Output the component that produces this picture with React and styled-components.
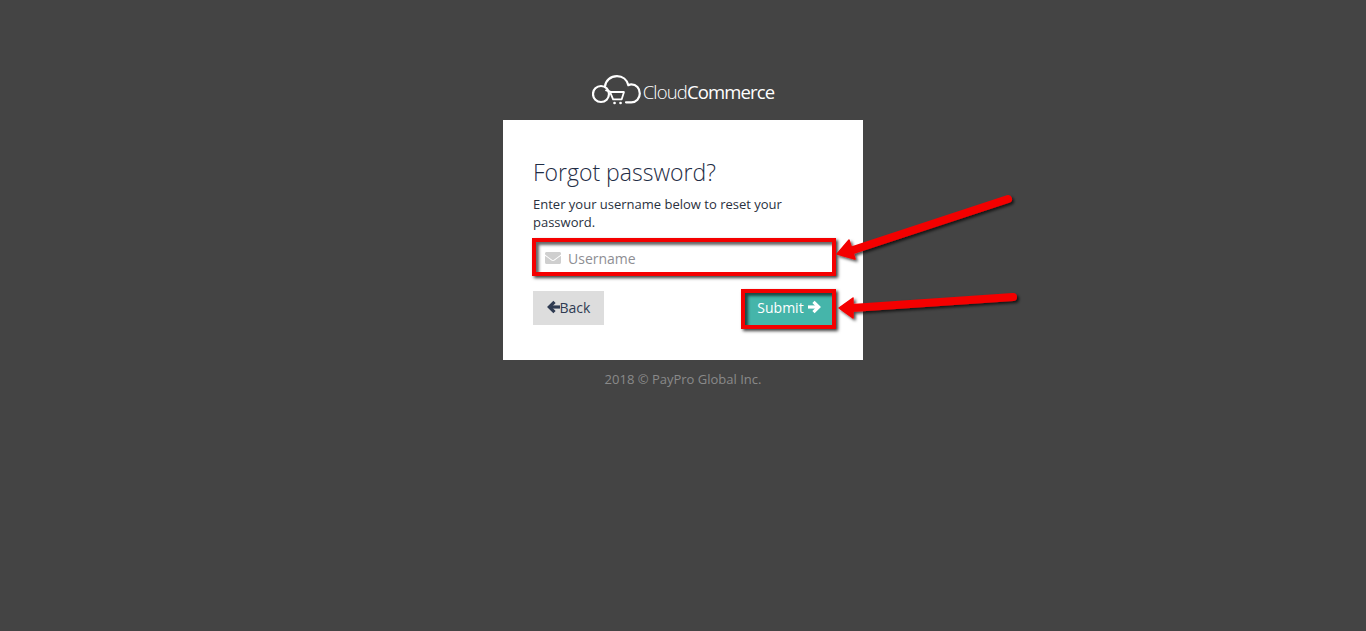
import React from 'react'
import styled, { createGlobalStyle } from 'styled-components'
import { FaEnvelope } from 'react-icons/fa'

const Global = createGlobalStyle`
  html, body {
    margin: 0;
    padding: 0;
    background: #444444;
    font-family: "Open Sans", "Liberation Sans", sans-serif;
  }
  * { box-sizing: border-box; }
`

const Page = styled.div`
  position: relative;
  min-height: 631px;
  display: flex;
  flex-direction: column;
  align-items: center;
  padding-top: 75px;
  overflow: hidden;
`

const Logo = styled.div`
  height: 45px;
  display: flex;
  align-items: flex-start;
  gap: 2px;
  color: #ffffff;
`

const LogoText = styled.span`
  font-size: 18.5px;
  line-height: 34px;
  letter-spacing: -0.85px;
  font-weight: 300;
  b { font-weight: 400; }
`

const Card = styled.div`
  width: 360px;
  height: 240px;
  background: #ffffff;
  padding: 37px 30px 35px;
`

const Title = styled.h1`
  margin: 0;
  font-size: 23px;
  line-height: 31px;
  font-weight: 300;
  color: #1f2d45;
`

const Hint = styled.p`
  margin: 7px 0 0;
  font-size: 13px;
  line-height: 18px;
  color: #2a3140;
`

const Field = styled.div`
  position: relative;
  height: 34px;
  margin-top: 9px;
  display: flex;
  align-items: center;
  padding-left: 12px;
  padding-top: 2px;
  gap: 7px;
  color: #cfcfcf;
  font-size: 16px;
`

const Input = styled.input`
  flex: 1;
  min-width: 0;
  border: none;
  outline: none;
  background: transparent;
  font-family: inherit;
  font-size: 14px;
  padding: 0;
  color: #333;
  &::placeholder { color: #8e8e93; opacity: 1; }
`

const Actions = styled.div`
  display: flex;
  justify-content: space-between;
  margin-top: 17px;
`

const Button = styled.button`
  position: relative;
  height: 34px;
  width: ${p => p.$width}px;
  border: none;
  padding: 0 0 2px;
  display: flex;
  align-items: center;
  justify-content: center;
  gap: ${p => p.$gap}px;
  font-family: inherit;
  font-size: 14px;
  background: ${p => p.$bg};
  color: ${p => p.$color};
`

const Highlight = styled.span`
  position: absolute;
  top: ${p => p.$top}px;
  left: ${p => p.$left}px;
  right: -3px;
  bottom: ${p => p.$bottom}px;
  border: 4px solid #f40000;
  box-shadow: 2px 2px 3px rgba(0,0,0,.75), inset 3px 3px 3px rgba(0,0,0,.6);
  pointer-events: none;
`

const Footer = styled.div`
  margin-top: 10px;
  font-size: 13px;
  line-height: 18px;
  color: #8a8a8a;
`

const Arrows = styled.svg`
  position: absolute;
  top: 0;
  left: 0;
  pointer-events: none;
`

const ArrowSvg = styled.svg`
  transform: ${p => (p.$flip ? 'scaleX(-1)' : 'none')};
`

function CloudMark() {
  return (
    <svg width="49" height="30" viewBox="0 0 49 30" fill="none" stroke="#fff" strokeWidth="2.2" strokeLinecap="round" strokeLinejoin="round">
      <circle cx="9" cy="19" r="8" />
      <path d="M13 11.500C13.500 5.500 18.500 1.200 25 1.200c5.500 0 10 3.600 11.300 9 1-.5 2-.8 3-.8 5 0 8.500 4 8.500 9 0 4.800-3.500 8.900-8.500 8.900H34" />
      <path d="M14 15.300l3.800 1 3.300 8h8.600L32 17H18.500" strokeWidth="1.800" />
      <path d="M22.500 28h.1M28.500 28h.1" strokeWidth="2.600" />
    </svg>
  )
}

// chunky arrow, the FontAwesome one in the package is too thin
function ChunkyArrow({ flip }) {
  return (
    <ArrowSvg $flip={flip} width="13" height="14" viewBox="0 0 13 14" fill="none" stroke="currentColor" strokeWidth="3.200" strokeLinejoin="miter">
      <path d="M0 7H10" />
      <path d="M5.500 1.800L10.700 7L5.500 12.200" />
    </ArrowSvg>
  )
}

function AnnotationArrows() {
  return (
    <Arrows width="1366" height="631" viewBox="0 0 1366 631">
      <defs>
        <filter id="arrowShadow" x="-10%" y="-30%" width="120%" height="170%">
          <feDropShadow dx="2" dy="2" stdDeviation="1.500" floodColor="#000" floodOpacity="0.7" />
        </filter>
      </defs>
      <g filter="url(#arrowShadow)" fill="#f40000" stroke="#f40000" strokeLinejoin="round">
        <path d="M1008 199L850 251" strokeWidth="8" strokeLinecap="round" fill="none" />
        <path d="M837 254L849 240L855 259Z" strokeWidth="1.500" />
        <path d="M1013 297L852 308" strokeWidth="8" strokeLinecap="round" fill="none" />
        <path d="M839 308L853 298L853 318Z" strokeWidth="1.500" />
      </g>
    </Arrows>
  )
}

export default function App() {
  return (
    <>
      <Global />
      <Page>
        <Logo>
          <CloudMark />
          <LogoText>Cloud<b>Commerce</b></LogoText>
        </Logo>
        <Card>
          <Title>Forgot password?</Title>
          <Hint>Enter your username below to reset your password.</Hint>
          <Field>
            <FaEnvelope />
            <Input placeholder="Username" />
            <Highlight $top={-2} $left={-1} $bottom={-2} />
          </Field>
          <Actions>
            <Button $width={71} $gap={0} $bg="#dddddd" $color="#2f3b52">
              <ChunkyArrow flip />Back
            </Button>
            <Button $width={88} $gap={4} $bg="#45b5aa" $color="#ffffff">
              Submit<ChunkyArrow />
              <Highlight $top={-2} $left={-4} $bottom={-4} />
            </Button>
          </Actions>
        </Card>
        <Footer>2018 © PayPro Global Inc.</Footer>
        <AnnotationArrows />
      </Page>
    </>
  )
}
